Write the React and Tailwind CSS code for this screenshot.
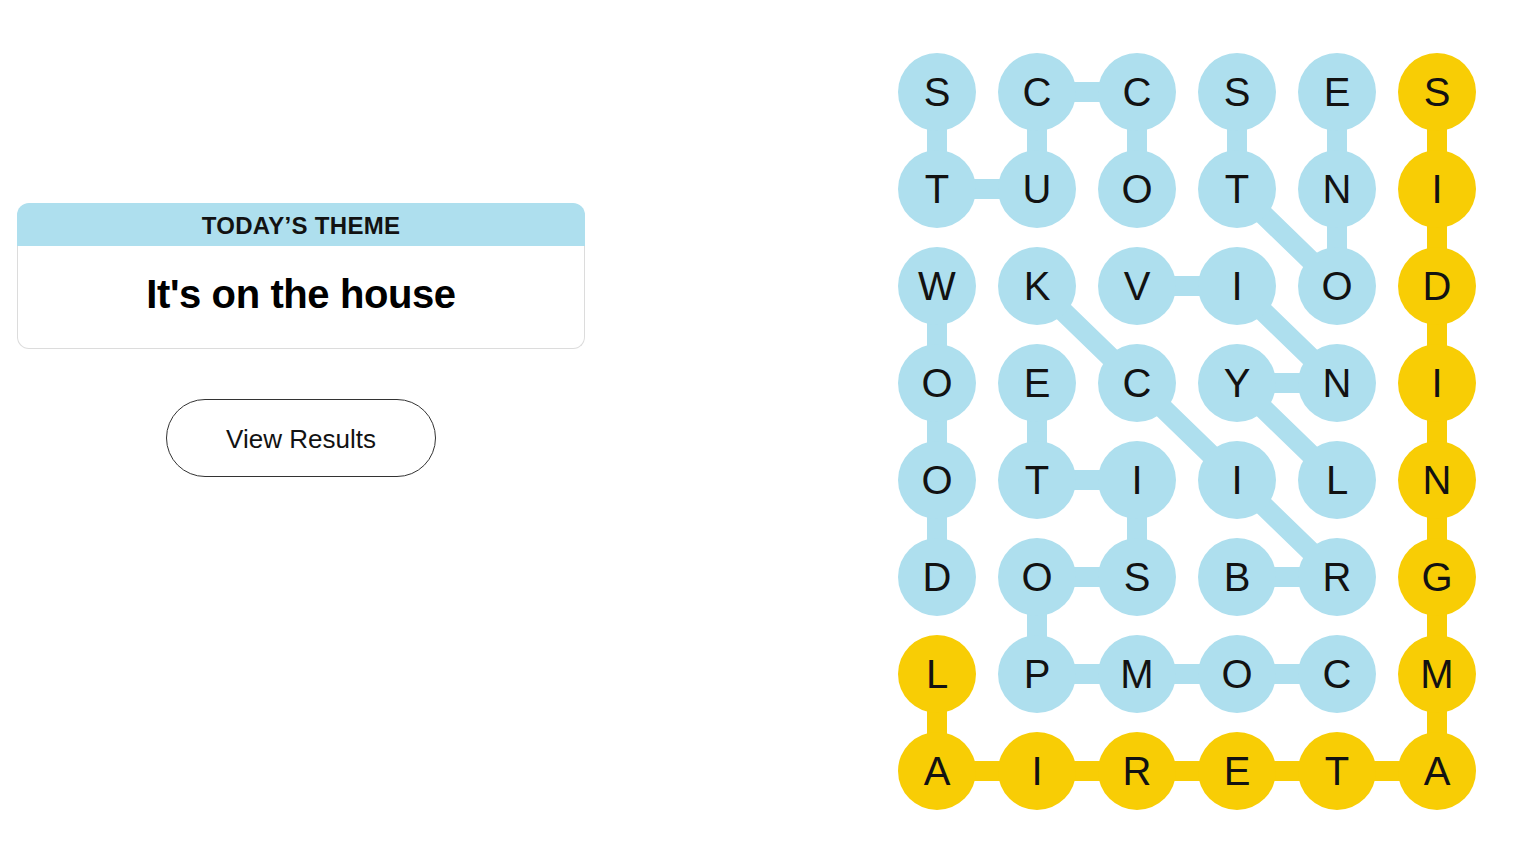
import React from 'react';

const BLUE = '#aedfee';
const YELLOW = '#f8cd05';

const rows = [
  'SCCSES',
  'TUOTNI',
  'WKVIOD',
  'OECYNI',
  'OTIILN',
  'DOSBRG',
  'LPMOCM',
  'AIRETA',
];

// cells that belong to the spangram
const spangram = [
  [0, 5], [1, 5], [2, 5], [3, 5], [4, 5], [5, 5], [6, 5], [7, 5],
  [7, 4], [7, 3], [7, 2], [7, 1], [7, 0], [6, 0],
];

// found words as paths of [row, col]
const words = [
  { path: [[0, 0], [1, 0], [1, 1], [0, 1], [0, 2], [1, 2]], color: BLUE }, // STUCCO
  { path: [[0, 3], [1, 3], [2, 4], [1, 4], [0, 4]], color: BLUE }, // STONE
  { path: [[2, 0], [3, 0], [4, 0], [5, 0]], color: BLUE }, // WOOD
  { path: [[5, 3], [5, 4], [4, 3], [3, 2], [2, 1]], color: BLUE }, // BRICK
  { path: [[2, 2], [2, 3], [3, 4], [3, 3], [4, 4]], color: BLUE }, // VINYL
  { path: [[6, 4], [6, 3], [6, 2], [6, 1], [5, 1], [5, 2], [4, 2], [4, 1], [3, 1]], color: BLUE }, // COMPOSITE
  { path: spangram, color: YELLOW },
];

const isSpangram = (r, c) => spangram.some(([sr, sc]) => sr === r && sc === c);

const cx = (c) => 39 + c * 100;
const cy = (r) => 39 + r * 97;

const Board = () => (
  <div className="relative">
    <svg className="absolute left-0 top-0" width="578" height="757" viewBox="0 0 578 757">
      {words.map((w, i) => (
        <polyline
          key={i}
          points={w.path.map(([r, c]) => `${cx(c)},${cy(r)}`).join(' ')}
          fill="none"
          stroke={w.color}
          strokeWidth="20"
          strokeLinejoin="round"
        />
      ))}
    </svg>
    <div className="relative grid grid-cols-[repeat(6,78px)] gap-x-[22px] gap-y-[19px]">
      {rows.map((row, r) =>
        row.split('').map((letter, c) => (
          <div
            key={`${r}-${c}`}
            className={`flex h-[78px] w-[78px] items-center justify-center rounded-full text-[40px] leading-none text-[#121212] ${
              isSpangram(r, c) ? 'bg-[#f8cd05]' : 'bg-[#aedfee]'
            }`}
          >
            {letter}
          </div>
        ))
      )}
    </div>
  </div>
);

export default function App() {
  return (
    <div className="flex h-[864px] w-full bg-white font-['Liberation_Sans',Arial,sans-serif] text-[#121212]">
      {/* Theme panel */}
      <div className="flex w-[602px] flex-col items-center pt-[203px]">
        <div className="w-[568px]">
          <div className="flex h-[43px] items-center justify-center rounded-t-[12px] bg-[#aedfee] pt-[2px] text-[24px] font-bold tracking-[0.3px]">
            TODAY’S THEME
          </div>
          <div className="flex h-[103px] items-center justify-center rounded-b-[12px] border-x border-b border-[#dcdcdc] pb-[6px] text-[40px] font-bold tracking-[-0.4px] text-black">
            It's on the house
          </div>
        </div>
        <button className="mt-[50px] h-[78px] w-[270px] rounded-full border border-[#333] bg-white pt-[2px] text-[26px] text-[#121212]">
          View Results
        </button>
      </div>

      {/* Board */}
      <div className="ml-[296px] pt-[53px]">
        <Board />
      </div>
    </div>
  );
}
